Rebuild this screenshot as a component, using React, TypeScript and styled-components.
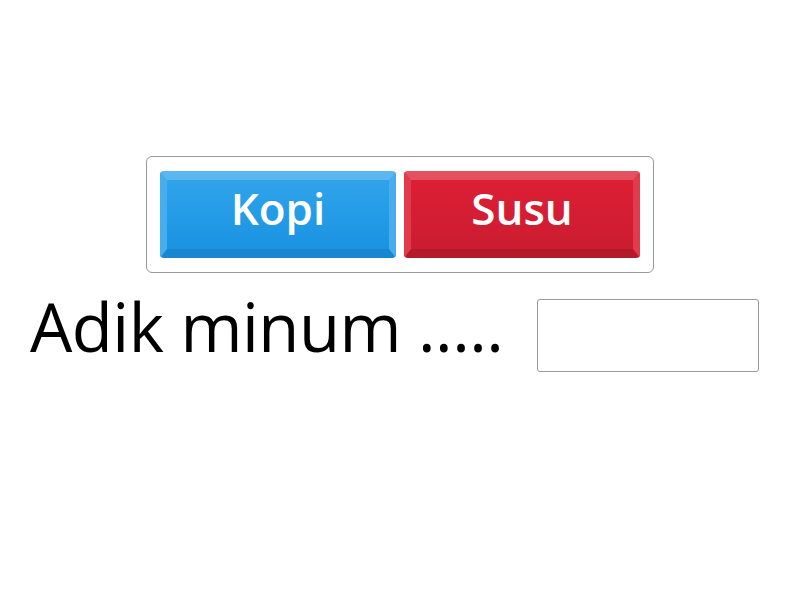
import React from "react";
import styled, { createGlobalStyle } from "styled-components";

const Global = createGlobalStyle`
  html, body { margin: 0; padding: 0; background: #fff; }
  body { font-family: "Open Sans", "Noto Sans", sans-serif; }
`;

const Page = styled.div`
  width: 800px;
  height: 600px;
  display: flex;
  flex-direction: column;
  align-items: center;
  padding-top: 156px;
  box-sizing: border-box;
`;

const Choices = styled.div`
  display: flex;
  gap: 8px;
  padding: 14px 13px;
  border: 1px solid #999;
  border-radius: 6px;
  box-sizing: border-box;
  width: 508px;
`;

const palettes = {
  blue: {
    top: "#5cb6ef",
    side: "#48adec",
    bottom: "#1886d0",
    from: "#2fa4eb",
    to: "#1a93e1",
  },
  red: {
    top: "#e5525f",
    side: "#e13c4c",
    bottom: "#b51a2b",
    from: "#dd1f35",
    to: "#cb1c30",
  },
};

type Tone = keyof typeof palettes;

const ChoiceButton = styled.button<{ $tone: Tone }>`
  flex: 1;
  height: 87px;
  box-sizing: border-box;
  border-style: solid;
  border-width: 9px 7px 9px 7px;
  border-color: ${(p) => palettes[p.$tone].top} ${(p) => palettes[p.$tone].side}
    ${(p) => palettes[p.$tone].bottom} ${(p) => palettes[p.$tone].side};
  border-radius: 4px;
  background: linear-gradient(
    ${(p) => palettes[p.$tone].from},
    ${(p) => palettes[p.$tone].to}
  );
  color: #fff;
  font-family: "Open Sans", sans-serif;
  font-weight: 600;
  font-size: 44px;
  line-height: 1;
  padding: 0 0 13px;
  display: flex;
  align-items: center;
  justify-content: center;
  cursor: pointer;
`;

const Sentence = styled.div`
  align-self: stretch;
  display: flex;
  align-items: flex-start;
  padding-left: 30px;
  margin-top: 26px;
  gap: 34px;
`;

const Prompt = styled.span`
  font-family: "Open Sans", sans-serif;
  font-size: 67px;
  line-height: 54px;
  letter-spacing: -0.5px;
  color: #000;
  white-space: nowrap;
`;

const Blank = styled.div`
  width: 222px;
  height: 73px;
  box-sizing: border-box;
  border: 1px solid #999;
  border-radius: 3px;
  background: #fff;
`;

export default function App() {
  return (
    <>
      <Global />
      <Page>
        <Choices>
          <ChoiceButton $tone="blue">Kopi</ChoiceButton>
          <ChoiceButton $tone="red">Susu</ChoiceButton>
        </Choices>
        <Sentence>
          <Prompt>Adik minum .....</Prompt>
          <Blank />
        </Sentence>
      </Page>
    </>
  );
}
